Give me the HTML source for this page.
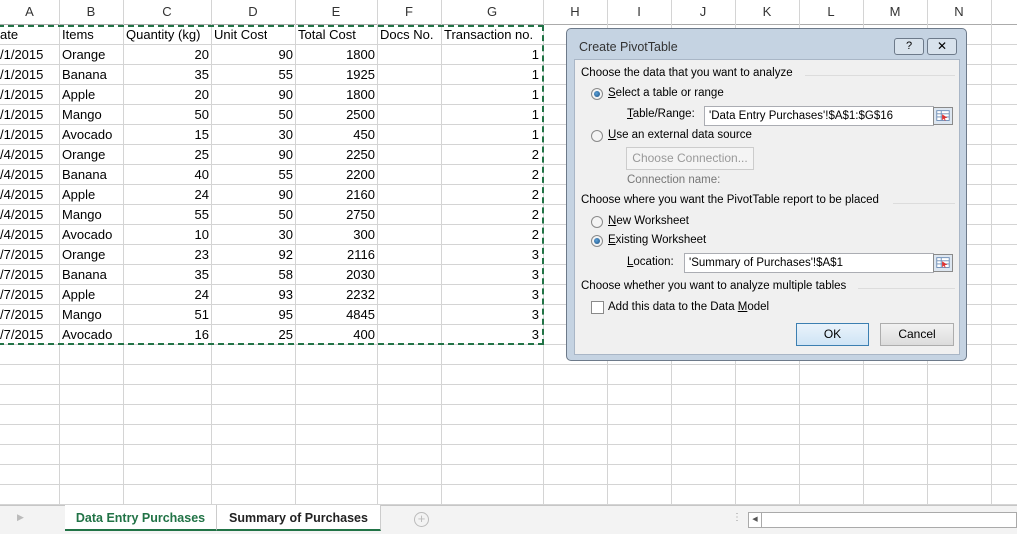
<!DOCTYPE html>
<html><head><style>
*{margin:0;padding:0;box-sizing:border-box}
body{width:1017px;height:534px;overflow:hidden;background:#fff;font-family:"Liberation Sans",sans-serif;position:relative;font-size:13px;color:#000}
.hdr{position:absolute;left:0;top:0;width:1017px;height:25px;background:#fff;border-bottom:1px solid #ababab}
.hl{position:absolute;top:0;font-size:13px;color:#333;text-align:center;line-height:24px}
.grid{position:absolute;left:0;top:25px;width:1017px;height:480px;background:repeating-linear-gradient(to bottom,transparent 0,transparent 19px,#d4d4d4 19px,#d4d4d4 20px)}
.v{position:absolute;top:0;width:1px;height:505px;background:#d4d4d4}
.c{position:absolute;height:20px;line-height:20px;font-size:13px;white-space:nowrap;overflow:hidden}
.r{text-align:right}
.sel{position:absolute;left:-2px;top:25px;width:546px;height:320px;border:2px dashed #217346;border-left:none}
.dlg{position:absolute;left:566px;top:28px;width:401px;height:333px;background:#c5d3e2;border:1px solid #6d7a8a;border-radius:5px}
.inner{position:absolute;left:7px;top:30px;width:386px;height:296px;background:#f0f0f0;border:1px solid #a9b6c6}
.dt{position:absolute;font-size:12.5px;color:#333}
.lbl{position:absolute;font-size:11.5px;color:#000;white-space:nowrap}
.sep{position:absolute;height:1px;background:#dcdcdc}
.radio{position:absolute;width:12px;height:12px;border-radius:50%;border:1px solid #8a8a8a;background:#f4f4f4}
.radio.on::after{content:"";position:absolute;left:2px;top:2px;width:6px;height:6px;border-radius:50%;background:radial-gradient(circle at 40% 40%,#5aa0d8,#1d4f80)}
.inp{position:absolute;height:20px;border:1px solid #abadb3;background:#fff;font-size:11.5px;line-height:18px;padding-left:4px}
.rb{position:absolute;width:20px;height:18px;border:1px solid #8a8a8a;background:#dde6f0}
.btn{position:absolute;height:23px;border:1px solid #adadad;background:linear-gradient(#f2f2f2,#dcdcdc);font-size:12px;text-align:center;line-height:21px}
u{text-decoration:underline}
</style></head><body>
<div class="hdr"></div>
<div class="grid"></div>
<div class="v" style="left:59px"></div><div class="v" style="left:123px"></div><div class="v" style="left:211px"></div><div class="v" style="left:295px"></div><div class="v" style="left:377px"></div><div class="v" style="left:441px"></div><div class="v" style="left:543px"></div><div class="v" style="left:607px"></div><div class="v" style="left:671px"></div><div class="v" style="left:735px"></div><div class="v" style="left:799px"></div><div class="v" style="left:863px"></div><div class="v" style="left:927px"></div><div class="v" style="left:991px"></div>
<div class="hl" style="left:0;width:59px">A</div><div class="hl" style="left:59px;width:64px">B</div><div class="hl" style="left:123px;width:88px">C</div><div class="hl" style="left:211px;width:84px">D</div><div class="hl" style="left:295px;width:82px">E</div><div class="hl" style="left:377px;width:64px">F</div><div class="hl" style="left:441px;width:102px">G</div><div class="hl" style="left:543px;width:64px">H</div><div class="hl" style="left:607px;width:64px">I</div><div class="hl" style="left:671px;width:64px">J</div><div class="hl" style="left:735px;width:64px">K</div><div class="hl" style="left:799px;width:64px">L</div><div class="hl" style="left:863px;width:64px">M</div><div class="hl" style="left:927px;width:64px">N</div>
<div id="cells"></div>
<div class="c" style="left:0;top:25px">ate</div><div class="c" style="left:62px;top:25px">Items</div><div class="c" style="left:126px;top:25px">Quantity (kg)</div><div class="c" style="left:214px;top:25px">Unit Cost</div><div class="c" style="left:298px;top:25px">Total Cost</div><div class="c" style="left:380px;top:25px">Docs No.</div><div class="c" style="left:444px;top:25px">Transaction no.</div>
<script>
var d=[["/1/2015","Orange",20,90,1800,1],["/1/2015","Banana",35,55,1925,1],["/1/2015","Apple",20,90,1800,1],["/1/2015","Mango",50,50,2500,1],["/1/2015","Avocado",15,30,450,1],["/4/2015","Orange",25,90,2250,2],["/4/2015","Banana",40,55,2200,2],["/4/2015","Apple",24,90,2160,2],["/4/2015","Mango",55,50,2750,2],["/4/2015","Avocado",10,30,300,2],["/7/2015","Orange",23,92,2116,3],["/7/2015","Banana",35,58,2030,3],["/7/2015","Apple",24,93,2232,3],["/7/2015","Mango",51,95,4845,3],["/7/2015","Avocado",16,25,400,3]];
var h="";d.forEach(function(r,i){var t=45+i*20;
h+='<div class="c" style="left:0;top:'+t+'px">'+r[0]+'</div><div class="c" style="left:62px;top:'+t+'px">'+r[1]+'</div>';
h+='<div class="c r" style="left:123px;width:86px;top:'+t+'px">'+r[2]+'</div><div class="c r" style="left:211px;width:82px;top:'+t+'px">'+r[3]+'</div><div class="c r" style="left:295px;width:80px;top:'+t+'px">'+r[4]+'</div><div class="c r" style="left:441px;width:98px;top:'+t+'px">'+r[5]+'</div>';});
document.getElementById("cells").innerHTML=h;
</script>
<div class="sel"></div>

<div class="dlg">
<div class="dt" style="left:12px;top:11px">Create PivotTable</div>
<div style="position:absolute;left:327px;top:9px;width:30px;height:17px;border:1px solid #6d7a8a;border-radius:3px;background:#d8e2ec;font-size:11px;text-align:center;line-height:15px">?</div>
<div style="position:absolute;left:360px;top:9px;width:30px;height:17px;border:1px solid #6d7a8a;border-radius:3px;background:#d8e2ec;font-size:12px;text-align:center;line-height:15px">✕</div>
<div class="inner">
<div class="lbl" style="left:6px;top:7px">Choose the data that you want to analyze</div><div class="sep" style="left:230px;top:15px;width:150px"></div>
<div class="radio on" style="left:16px;top:28px"></div><div class="lbl" style="left:33px;top:27px"><u>S</u>elect a table or range</div>
<div class="lbl" style="left:52px;top:48px"><u>T</u>able/Range:</div>
<div class="inp" style="left:129px;top:46px;width:230px">'Data Entry Purchases'!$A$1:$G$16</div>
<svg class="rb" style="left:358px;top:47px" viewBox="0 0 20 18"><rect x="3" y="3" width="14" height="11" fill="#fff" stroke="#6a8bb5"/><path d="M3 6.5h14M3 10h14M8 3v11" stroke="#6a8bb5"/><path d="M9 7l6 4-3 .5 1 2.5-1 .4-1-2.5-2 2z" fill="#d33"/></svg>
<div class="radio" style="left:16px;top:70px"></div><div class="lbl" style="left:33px;top:69px"><u>U</u>se an external data source</div>
<div class="btn" style="left:51px;top:87px;width:128px;color:#999;background:#f4f4f4;border-color:#ccc">Choose Connection...</div>
<div class="lbl" style="left:52px;top:114px;color:#777">Connection name:</div>
<div class="lbl" style="left:6px;top:134px">Choose where you want the PivotTable report to be placed</div><div class="sep" style="left:318px;top:143px;width:62px"></div>
<div class="radio" style="left:16px;top:156px"></div><div class="lbl" style="left:33px;top:155px"><u>N</u>ew Worksheet</div>
<div class="radio on" style="left:16px;top:175px"></div><div class="lbl" style="left:33px;top:174px"><u>E</u>xisting Worksheet</div>
<div class="lbl" style="left:52px;top:196px"><u>L</u>ocation:</div>
<div class="inp" style="left:109px;top:193px;width:250px">'Summary of Purchases'!$A$1</div>
<svg class="rb" style="left:358px;top:194px" viewBox="0 0 20 18"><rect x="3" y="3" width="14" height="11" fill="#fff" stroke="#6a8bb5"/><path d="M3 6.5h14M3 10h14M8 3v11" stroke="#6a8bb5"/><path d="M9 7l6 4-3 .5 1 2.5-1 .4-1-2.5-2 2z" fill="#d33"/></svg>
<div class="lbl" style="left:6px;top:220px">Choose whether you want to analyze multiple tables</div><div class="sep" style="left:283px;top:228px;width:97px"></div>
<div style="position:absolute;left:16px;top:241px;width:13px;height:13px;border:1px solid #8a8a8a;background:#fff"></div><div class="lbl" style="left:33px;top:241px">Add this data to the Data <u>M</u>odel</div>
<div class="btn" style="left:221px;top:263px;width:73px;border-color:#3c7fb1;background:linear-gradient(#eaf3fb,#cfe4f5)">OK</div>
<div class="btn" style="left:305px;top:263px;width:74px">Cancel</div>
</div></div>

<div style="position:absolute;left:0;top:505px;width:1017px;height:29px;background:#f3f3f3;border-top:1px solid #c6c6c6"></div>
<div style="position:absolute;left:17px;top:512px;color:#bbb;font-size:9px">▶</div>
<div style="position:absolute;left:65px;top:505px;width:151px;height:26px;background:#fff;border-bottom:2px solid #217346;color:#217346;font-weight:bold;font-size:12.5px;text-align:center;line-height:26px">Data Entry Purchases</div>
<div style="position:absolute;left:216px;top:505px;width:165px;height:26px;background:#fff;border-left:1px solid #ccc;border-right:1px solid #ccc;border-bottom:2px solid #217346;color:#222;font-weight:bold;font-size:12.5px;text-align:center;line-height:26px">Summary of Purchases</div>
<div style="position:absolute;left:414px;top:512px;width:15px;height:15px;border:1px solid #bbb;border-radius:50%;color:#bbb;font-size:13px;line-height:12px;text-align:center">+</div>
<div style="position:absolute;left:732px;top:512px;color:#999;font-size:10px">⋮</div>
<div style="position:absolute;left:748px;top:512px;width:269px;height:16px;border:1px solid #aaa;background:#fff"><div style="width:13px;height:14px;border-right:1px solid #aaa;font-size:7px;color:#555;text-align:center;line-height:14px">◀</div></div>
</body></html>
